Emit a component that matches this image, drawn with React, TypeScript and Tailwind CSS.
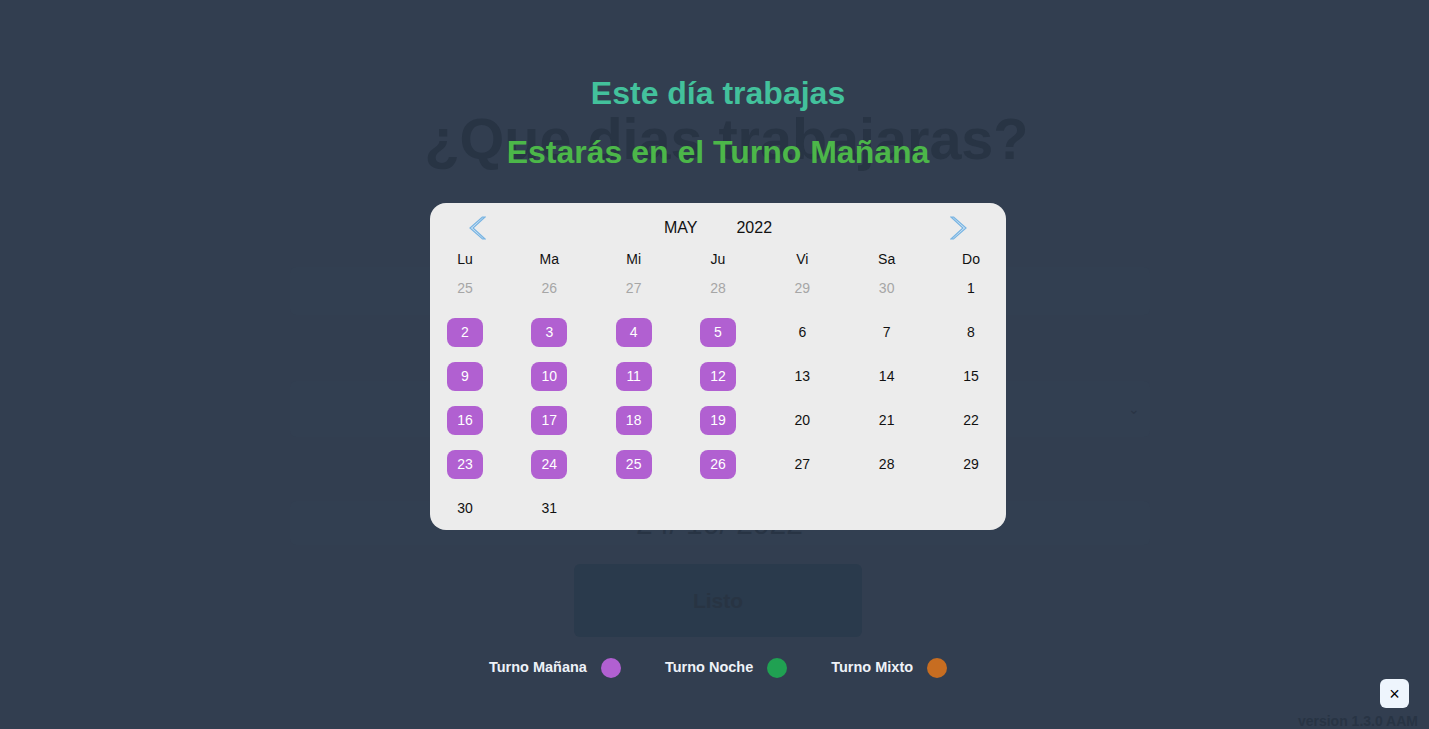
import React from "react";

const font = { fontFamily: '"Liberation Sans", Arial, sans-serif' };

const dayNames = ["Lu", "Ma", "Mi", "Ju", "Vi", "Sa", "Do"];

type Cell = { n: number; muted?: boolean; shift?: boolean } | null;

const buildWeeks = (): Cell[][] => {
  const cells: Cell[] = [
    { n: 25, muted: true },
    { n: 26, muted: true },
    { n: 27, muted: true },
    { n: 28, muted: true },
    { n: 29, muted: true },
    { n: 30, muted: true },
  ];
  for (let d = 1; d <= 31; d++) {
    const col = cells.length % 7;
    cells.push({ n: d, shift: col < 4 && d >= 2 && d <= 26 });
  }
  while (cells.length % 7 !== 0) cells.push(null);
  const weeks: Cell[][] = [];
  for (let i = 0; i < cells.length; i += 7) weeks.push(cells.slice(i, i + 7));
  return weeks;
};

const Chevron = ({ flip }: { flip?: boolean }) => (
  <svg
    width="18"
    height="24"
    viewBox="0 0 18 24"
    className={flip ? "scale-x-[-1]" : ""}
  >
    <path
      d="M14.5 1 L2 12 L14.5 23 L17 23 L5 12 L17 1 Z"
      fill="#dcebf7"
      stroke="#78b4e2"
      strokeWidth="1.2"
      strokeLinejoin="miter"
    />
  </svg>
);

const Legend = ({ label, color }: { label: string; color: string }) => (
  <div className="flex items-center gap-[14px]">
    <span className="text-[14.5px] font-bold text-[#eef2f8]">{label}</span>
    <span className={`w-5 h-5 rounded-full ${color}`} />
  </div>
);

const Calendar = () => {
  const weeks = buildWeeks();
  return (
    <div className="w-[576px] rounded-[16px] bg-[#ececec] pt-[13px] overflow-hidden">
      <div className="flex items-center justify-between px-[38px] h-6">
        <Chevron />
        <div className="flex items-center gap-[39px] text-[16px] text-[#111]">
          <span>MAY</span>
          <span>2022</span>
        </div>
        <Chevron flip />
      </div>
      <div className="flex justify-between px-[17px] mt-[12px] h-[14px] items-center">
        {dayNames.map((d) => (
          <span key={d} className="w-9 text-center text-[14px] text-[#111]">
            {d}
          </span>
        ))}
      </div>
      {weeks.map((week, i) => (
        <div key={i} className="flex justify-between px-[17px] h-[44px] items-center">
          {week.map((c, j) => (
            <div
              key={j}
              className={`w-9 h-[29px] rounded-[8px] flex items-center justify-center text-[14px] ${
                c?.shift
                  ? "bg-[#b160d1] text-white"
                  : c?.muted
                  ? "text-[#a6a6a6]"
                  : "text-[#111]"
              }`}
            >
              {c ? c.n : ""}
            </div>
          ))}
        </div>
      ))}
    </div>
  );
};

export default function App() {
  return (
    <div className="relative w-full h-[729px] overflow-hidden bg-[#323e50]" style={font}>
      {/* page behind the overlay */}
      <div className="flex flex-col items-center pl-[7px]">
        <h1 className="mt-[106px] ml-[17px] text-[57.5px] leading-[66px] font-bold text-[#283444]">
          ¿Que dias trabajaras?
        </h1>
        <div className="mt-[95px] ml-[3px] w-[860px] h-[48px] rounded-md bg-[#323f51]" />
        <div className="mt-[66px] ml-[3px] w-[860px] h-[56px] rounded-md bg-[#323f51] flex items-center justify-end pr-[10px]">
          <span className="text-[#2a3545] text-[14px]">⌄</span>
        </div>
        <div className="mt-[64px] ml-[3px] w-[860px] h-[44px] rounded-md bg-[#323f51] flex items-center justify-center">
          <span className="text-[30px] text-[#283444]">24/ 10/ 2022</span>
        </div>
        <button className="mt-[19px] w-[288px] h-[73px] rounded-md bg-[#2a3a4c] text-[21px] font-bold text-[#283443]">
          Listo
        </button>
      </div>
      <span className="absolute right-[11px] bottom-[-3px] text-[14px] font-bold text-[#283444]">
        version 1.3.0 AAM
      </span>

      {/* modal */}
      <div className="absolute inset-0 flex flex-col items-center pl-[7px]">
        <h2 className="mt-[75px] text-[32px] leading-[37px] font-bold text-[#43c19c]">
          Este día trabajas
        </h2>
        <h2 className="mt-[22px] text-[32px] leading-[37px] font-bold text-[#4cb749]">
          Estarás en el Turno Mañana
        </h2>
        <div className="mt-[32px]">
          <Calendar />
        </div>
        <div className="mt-[127px] flex items-center gap-[44px]">
          <Legend label="Turno Mañana" color="bg-[#b160d1]" />
          <Legend label="Turno Noche" color="bg-[#20a152]" />
          <Legend label="Turno Mixto" color="bg-[#c76d21]" />
        </div>
      </div>
      <button className="absolute left-[1380px] top-[679px] w-[29px] h-[29px] rounded-[6px] bg-[#eef5fd] flex items-center justify-center text-[18px] text-black leading-none">
        ×
      </button>
    </div>
  );
}
